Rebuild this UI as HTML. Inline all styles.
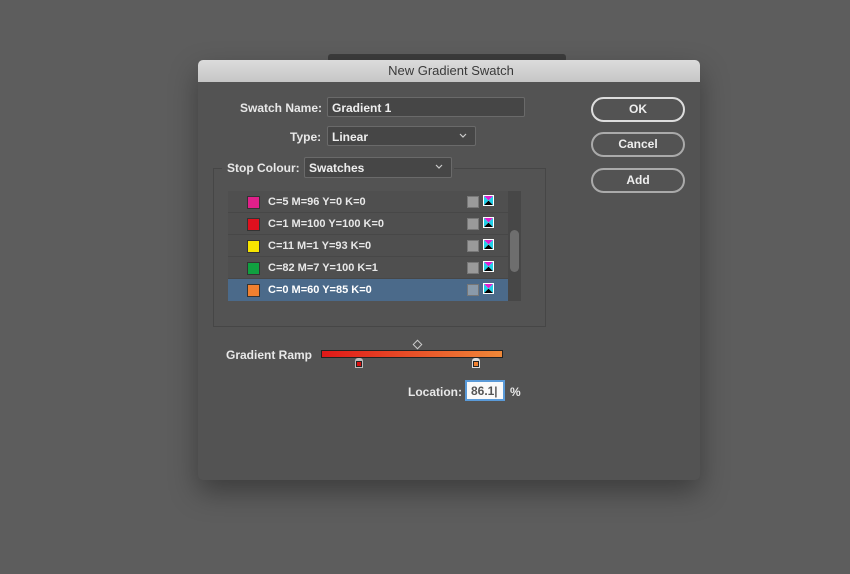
<!DOCTYPE html>
<html><head><style>
body{margin:0;width:850px;height:574px;background:#5d5d5d;font-family:"Liberation Sans",Arial,sans-serif;position:relative;overflow:hidden}
.a{position:absolute}
.t{color:#e8e8e8;font-size:12px;font-weight:bold}
.fld{background:#464646;border:1px solid #6a6a6a;border-radius:2px;color:#eee;font-size:12px;font-weight:bold;box-sizing:border-box;padding:3px 0 0 4px}
.chev{position:absolute;right:8px;top:6px}
.btn{position:absolute;left:591px;width:94px;height:25px;box-sizing:border-box;border:2px solid #bbb;border-radius:13px;color:#eee;font-size:12px;font-weight:bold;text-align:center;line-height:21px}
.row{position:absolute;left:228px;width:280px;height:22px;border-bottom:1px solid #474747;box-sizing:border-box;color:#e8e8e8;font-size:11px;font-weight:bold}
.sw{position:absolute;left:19px;top:5px;width:11px;height:11px;border:1px solid #333}
.row span{position:absolute;left:40px;top:5px}
.g{position:absolute;left:239px;top:5px;width:10px;height:10px;background:#9a9a9a;border:1px solid #777}
.c{position:absolute;left:255px;top:4px}
</style></head><body>
<div class="a" style="left:328px;top:54px;width:238px;height:8px;background:#3c3c3c;border-radius:3px"></div>
<div class="a" style="left:198px;top:60px;width:502px;height:420px;background:#535353;border-radius:5px;box-shadow:0 12px 28px rgba(0,0,0,0.35);overflow:hidden">
  <div class="a" style="left:0;top:0;width:502px;height:22px;background:linear-gradient(#dcdcdc,#c6c6c6);color:#3a3a3a;font-size:13px;text-align:center;line-height:22px;padding-left:2px">New Gradient Swatch</div>
</div>
<svg width="0" height="0" style="position:absolute"><defs>
<symbol id="ck" viewBox="0 0 11 11"><rect width="11" height="11" fill="#fff"/><polygon points="1,1 10,1 5.5,5.5" fill="#e020d0"/><polygon points="1,10 10,10 5.5,5.5" fill="#000"/><polygon points="1,1 1,10 5.5,5.5" fill="#20d0e8"/><polygon points="10,1 10,10 5.5,5.5" fill="#20d0e8"/></symbol>
<symbol id="cv" viewBox="0 0 8 5"><path d="M1 1 L4 4 L7 1" fill="none" stroke="#ccc" stroke-width="1.2"/></symbol>
</defs></svg>
<div class="a t" style="left:240px;top:101px">Swatch Name:</div>
<div class="a fld" style="left:327px;top:97px;width:198px;height:20px">Gradient 1</div>
<div class="a t" style="left:290px;top:130px">Type:</div>
<div class="a fld" style="left:327px;top:126px;width:149px;height:20px">Linear<svg class="chev" width="8" height="5"><use href="#cv"/></svg></div>
<div class="a" style="left:213px;top:168px;width:333px;height:159px;border:1px solid #464646;box-sizing:border-box"></div>
<div class="a" style="left:222px;top:157px;width:232px;height:22px;background:#535353"></div>
<div class="a t" style="left:227px;top:161px">Stop Colour:</div>
<div class="a fld" style="left:304px;top:157px;width:148px;height:21px">Swatches<svg class="chev" width="8" height="5"><use href="#cv"/></svg></div>
<div class="a" style="left:228px;top:191px;width:293px;height:110px;background:#4a4a4a"></div>
<div class="row" style="top:191px;background:#4f4f4f"><div class="sw" style="background:#e0208a"></div><span>C=5 M=96 Y=0 K=0</span><div class="g"></div><svg class="c" width="11" height="11"><use href="#ck"/></svg></div>
<div class="row" style="top:213px;background:#4f4f4f"><div class="sw" style="background:#e0101e"></div><span>C=1 M=100 Y=100 K=0</span><div class="g"></div><svg class="c" width="11" height="11"><use href="#ck"/></svg></div>
<div class="row" style="top:235px;background:#4f4f4f"><div class="sw" style="background:#f7e500"></div><span>C=11 M=1 Y=93 K=0</span><div class="g"></div><svg class="c" width="11" height="11"><use href="#ck"/></svg></div>
<div class="row" style="top:257px;background:#4f4f4f"><div class="sw" style="background:#10a040"></div><span>C=82 M=7 Y=100 K=1</span><div class="g"></div><svg class="c" width="11" height="11"><use href="#ck"/></svg></div>
<div class="row" style="top:279px;background:#4b6a8a;border-bottom:none"><div class="sw" style="background:#f08030"></div><span style="color:#fff">C=0 M=60 Y=85 K=0</span><div class="g" style="background:#8a9aaa"></div><svg class="c" width="11" height="11"><use href="#ck"/></svg></div>
<div class="a" style="left:508px;top:191px;width:13px;height:110px;background:#474747"></div>
<div class="a" style="left:510px;top:230px;width:9px;height:42px;background:#6e6e6e;border-radius:5px"></div>
<div class="a t" style="left:226px;top:348px">Gradient Ramp</div>
<div class="a" style="left:414px;top:341px;width:5px;height:5px;border:1px solid #ccc;transform:rotate(45deg)"></div>
<div class="a" style="left:321px;top:350px;width:180px;height:6px;background:linear-gradient(90deg,#e01818,#f08838);border:1px solid #222"></div>
<div class="a" style="left:355px;top:358px;width:8px;height:10px;background:#bbb;border-radius:3px 3px 0 0"><div class="a" style="left:1px;top:3px;width:4px;height:4px;background:#d81010;border:1px solid #222"></div></div>
<div class="a" style="left:472px;top:358px;width:8px;height:10px;background:#ddd;border-radius:3px 3px 0 0"><div class="a" style="left:1px;top:3px;width:4px;height:4px;background:#f08030;border:1px solid #222"></div></div>
<div class="a t" style="left:408px;top:385px">Location:</div>
<div class="a" style="left:465px;top:380px;width:40px;height:21px;background:#fafafa;border:2px solid #5a9ad8;box-sizing:border-box;color:#555;font-size:12px;font-weight:bold;padding:2px 0 0 4px">86.1<span style="color:#000;font-weight:normal">|</span></div>
<div class="a t" style="left:510px;top:385px">%</div>
<div class="btn" style="top:97px;border-color:#ddd">OK</div>
<div class="btn" style="top:132px;border-color:#aaa">Cancel</div>
<div class="btn" style="top:168px;border-color:#aaa">Add</div>
</body></html>
